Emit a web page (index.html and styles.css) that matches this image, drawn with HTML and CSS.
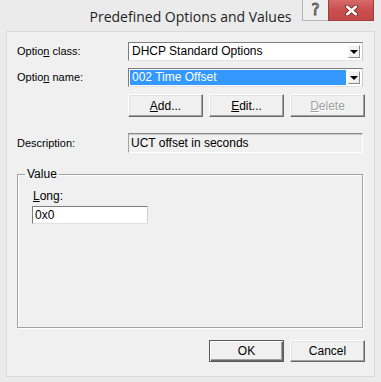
FILE: index.html
```html
<!DOCTYPE html>
<html>
<head>
<meta charset="utf-8">
<link rel="stylesheet" href="styles.css">
</head>
<body>
<div class="window">
  <div class="titlebar">
    <span class="title">Predefined Options and Values</span>
    <div class="caption-buttons">
      <div class="cap-help">?</div>
      <div class="cap-close">
        <svg width="13" height="11" viewBox="0 0 13 11">
          <path d="M2.2 1.8 L10.8 9.2 M10.8 1.8 L2.2 9.2" stroke="#7a2a2a" stroke-width="4.4" stroke-linecap="round"/>
          <path d="M2.2 1.8 L10.8 9.2 M10.8 1.8 L2.2 9.2" stroke="#ffffff" stroke-width="2.6" stroke-linecap="round"/>
        </svg>
      </div>
    </div>
  </div>
  <div class="client">
    <div class="form">
      <label class="lbl">Optio<u>n</u> class:</label>
      <div class="combo">
        <span class="combo-text">DHCP Standard Options</span>
        <span class="combo-arrow"></span>
      </div>
      <label class="lbl">Optio<u>n</u> name:</label>
      <div class="combo">
        <span class="combo-text selected">002 Time Offset</span>
        <span class="combo-arrow"></span>
      </div>
      <span></span>
      <div class="btn-row">
        <button class="btn"><u>A</u>dd...</button>
        <button class="btn"><u>E</u>dit...</button>
        <button class="btn disabled"><u>D</u>elete</button>
      </div>
      <label class="lbl desc-lbl">Description:</label>
      <div class="desc">UCT offset in seconds</div>
    </div>
    <fieldset class="group">
      <legend>Value</legend>
      <label class="lbl long-lbl"><u>L</u>ong:</label>
      <div class="textbox">0x0</div>
    </fieldset>
    <div class="footer">
      <button class="btn default">OK</button>
      <button class="btn">Cancel</button>
    </div>
  </div>
</div>
</body>
</html>
```

FILE: styles.css
```css
* { box-sizing: border-box; }
html, body { margin: 0; padding: 0; }
body {
  width: 381px;
  height: 382px;
  overflow: hidden;
  font-family: "Liberation Sans", Arial, sans-serif;
  font-size: 11px;
  color: #000;
}
.window {
  width: 381px;
  height: 382px;
  background: #ebebeb;
  display: flex;
  flex-direction: column;
  position: relative;
}
.titlebar {
  height: 31px;
  display: flex;
  align-items: center;
  justify-content: center;
  flex-shrink: 0;
}
.title {
  font-family: "Open Sans", "Noto Sans", sans-serif;
  font-size: 14px;
  color: #1e1e1e;
  margin-top: 1px;
}
.caption-buttons {
  position: absolute;
  top: 0;
  right: 7px;
  display: flex;
  height: 21px;
}
.cap-help {
  width: 26px;
  height: 21px;
  background: #eeeeee;
  border: 1px solid #b5b5b5;
  border-top: none;
  border-right: none;
  display: flex;
  align-items: center;
  justify-content: center;
  font-family: "DejaVu Sans", sans-serif;
  font-size: 15px;
  color: #eeeeee;
  -webkit-text-stroke: 1px #555;
}
.cap-close {
  width: 46px;
  height: 21px;
  background: linear-gradient(#d86a6a, #c94f4f 50%, #c44848);
  border: 1px solid #a33c3c;
  border-top: none;
  display: flex;
  align-items: center;
  justify-content: center;
}
.client {
  flex: 1;
  margin: 0 6px 5px 6px;
  background: #f0f0f0;
  border: 1px solid #dadada;
  padding: 10px 9px 14px 10px;
  display: flex;
  flex-direction: column;
}
.form {
  display: grid;
  grid-template-columns: 111px 235px;
  row-gap: 7px;
  align-items: center;
}
.lbl {
  line-height: 13px;
  white-space: nowrap;
}
.combo {
  height: 19px;
  background: #fff;
  border: 1px solid;
  border-color: #7d7d7d #c9c9c9 #e2e2e2 #7d7d7d;
  display: flex;
  align-items: center;
  padding: 1px 2px 1px 1px;
}
.combo-text {
  flex: 1;
  height: 15px;
  line-height: 15px;
  padding-left: 2px;
  font-size: 12px;
}
.combo-text.selected {
  background: #3399ff;
  color: #fff;
  margin-right: 2px;
}
.combo-arrow {
  width: 12px;
  height: 13px;
  background: #f0f0f0;
  border: 1px solid;
  border-color: #fafafa #8a8a8a #8a8a8a #fafafa;
  position: relative;
}
.combo-arrow::after {
  content: "";
  position: absolute;
  left: 1px;
  top: 4px;
  border-left: 4px solid transparent;
  border-right: 4px solid transparent;
  border-top: 4px solid #000;
}
.btn-row {
  display: flex;
  gap: 6px;
  width: 237px;
}
.btn {
  width: 75px;
  height: 23px;
  padding: 0;
  font-family: "Liberation Sans", Arial, sans-serif;
  font-size: 12px;
  color: #000;
  background: #f0f0f0;
  border: 1px solid;
  border-color: #ffffff #696969 #696969 #ffffff;
  box-shadow: inset -1px -1px 0 #a0a0a0, inset 1px 1px 0 #e3e3e3;
}
.btn.disabled {
  color: #a0a0a0;
  text-shadow: 1px 1px 0 #fff;
}
.btn.default {
  border-color: #5a5a5a;
  box-shadow: inset 1px 1px 0 #ffffff, inset -1px -1px 0 #696969, inset -2px -2px 0 #a0a0a0;
}
.desc-lbl { margin-top: 9px; }
.desc {
  margin-top: 9px;
  height: 20px;
  background: #f0f0f0;
  border: 1px solid;
  border-color: #8c8c8c #ffffff #ffffff #a0a0a0;
  box-shadow: inset 0 1px 0 #c8c8c8;
  padding: 2px 2px;
  font-size: 12px;
  line-height: 14px;
}
.group {
  flex: 1;
  margin: 15px 2px 0 0;
  padding: 0 0 0 15px;
  border: 1px solid #a3a3a3;
  box-shadow: inset 1px 1px 0 #ffffff, 1px 1px 0 #ffffff;
  min-width: 0;
}
.group legend {
  padding: 0 2px;
  margin-left: -8px;
  line-height: 13px;
  font-size: 12px;
}
.long-lbl {
  display: block;
  margin-top: 9px;
  font-size: 12px;
}
.textbox {
  margin-top: 3px;
  margin-left: -1px;
  width: 116px;
  height: 18px;
  background: #fff;
  border: 1px solid;
  border-color: #7d7d7d #d0d0d0 #e2e2e2 #7d7d7d;
  padding: 1px 2px;
  font-size: 12px;
  line-height: 14px;
}
.footer {
  margin-top: 12px;
  display: flex;
  justify-content: flex-end;
  gap: 6px;
}
.footer .btn { height: 22px; }
```
